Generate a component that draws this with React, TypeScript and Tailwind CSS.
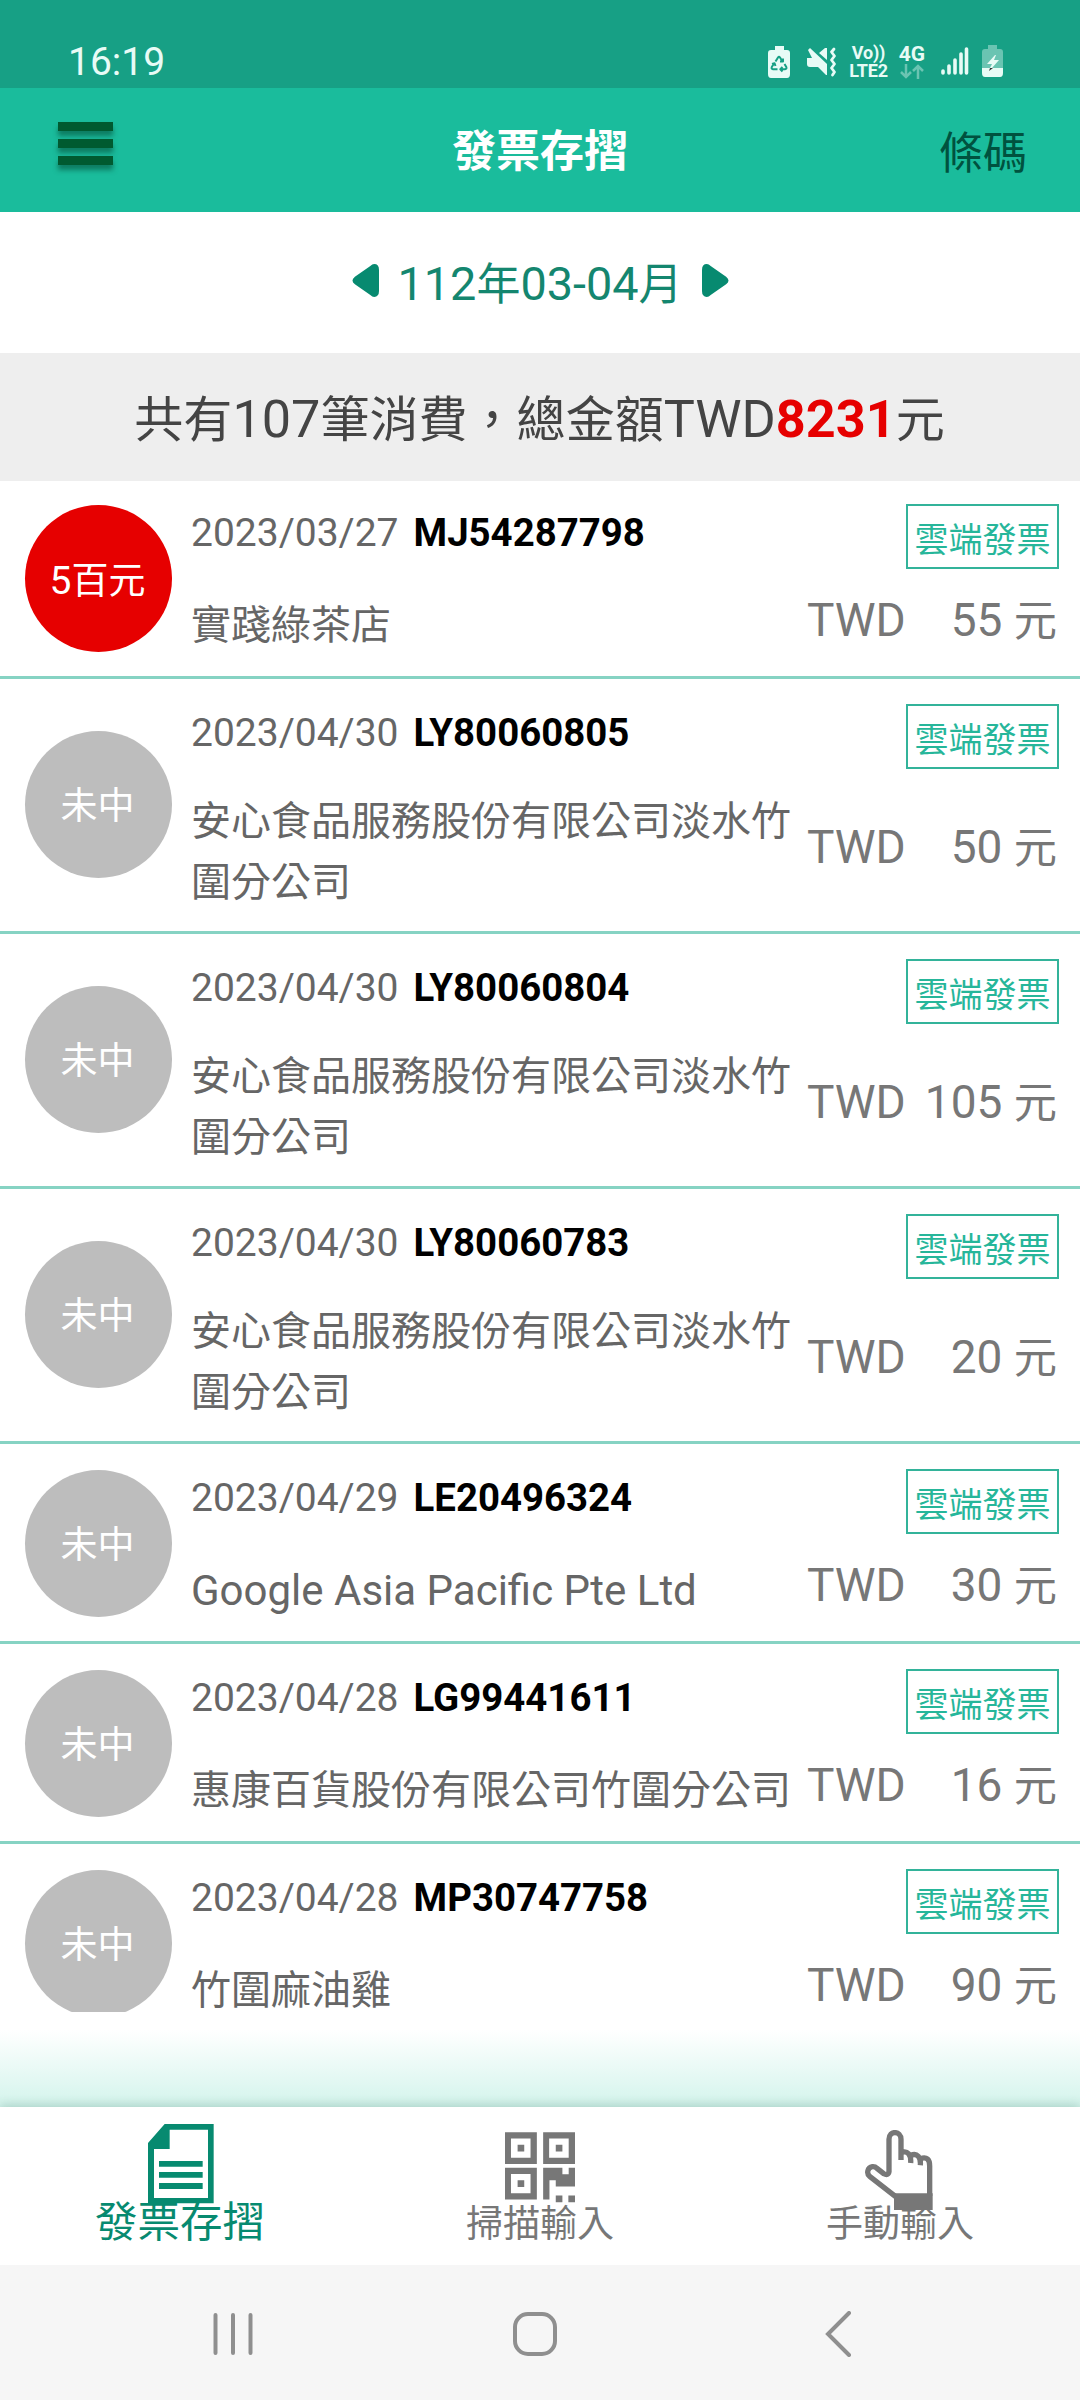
import type { ReactNode } from 'react';
import clsx from 'clsx';

type Invoice = {
  date: string;
  number: string;
  store: ReactNode;
  amount: number;
  prize?: ReactNode;
  tall?: boolean;
};

const invoices: Invoice[] = [
  {
    date: '2023/03/27',
    number: 'MJ54287798',
    store: '實踐綠茶店',
    amount: 55,
    prize: (
      <p>
        <span className="text-[39px]">5</span>百元
      </p>
    ),
  },
  { date: '2023/04/30', number: 'LY80060805', store: '安心食品服務股份有限公司淡水竹圍分公司', amount: 50, tall: true },
  { date: '2023/04/30', number: 'LY80060804', store: '安心食品服務股份有限公司淡水竹圍分公司', amount: 105, tall: true },
  { date: '2023/04/30', number: 'LY80060783', store: '安心食品服務股份有限公司淡水竹圍分公司', amount: 20, tall: true },
  {
    date: '2023/04/29',
    number: 'LE20496324',
    store: <span className="text-[42px]">Google Asia Pacific Pte Ltd</span>,
    amount: 30,
  },
  { date: '2023/04/28', number: 'LG99441611', store: '惠康百貨股份有限公司竹圍分公司', amount: 16 },
  { date: '2023/04/28', number: 'MP30747758', store: '竹圍麻油雞', amount: 90 },
];

// Han glyphs run slightly smaller than the latin text beside them
function Han({ children }: { children: ReactNode }) {
  return <span className="text-[0.94em]">{children}</span>;
}

function StatusBar() {
  return (
    <div className="flex h-[88px] shrink-0 items-end justify-between bg-[#17a085] pr-[76px] pb-[9px] pl-[68px] text-[#e8fbf6]">
      <span className="-mb-[1px] text-[39px] leading-[36px]">16:19</span>
      <div className="flex h-[34px] items-start">
        <svg width="22" height="32" viewBox="0 0 22 32" className="mt-[1px]">
          <path fill="currentColor" d="M7 0h9v4h3q3 0 3 3v21q0 4-3 4H3q-3 0-3-4V7q0-3 3-3h4z" />
          <path
            fill="none"
            stroke="#17a085"
            strokeWidth="2"
            strokeLinejoin="round"
            d="M7.500 15.500 10 11.500q1-1.500 2 0L14.500 15.500M16.500 18l1.800 3q.8 2-1.300 2.200h-4.500M9.500 23.200H5q-2-.2-1.200-2.200l2.200-3.500M14.500 21l-2.200 2.200 2.200 2.300M12 15.500h3v-3M4 18l2.500-.8 1 2.800"
          />
        </svg>
        <svg width="30" height="30" viewBox="0 0 30 30" className="mt-[2px] ml-[17px]">
          <path fill="currentColor" d="M0 11h5L1 3 3 1 20 17v11h-1l-8-8H3q-3 0-3-3zM20 1v12l-8-7 6-5z" />
          <path
            fill="none"
            stroke="currentColor"
            strokeWidth="2.800"
            strokeLinecap="round"
            strokeLinejoin="round"
            d="M27 2l-2.500 3 3 4-3 4 3 4-3 4 3 4-2 3"
          />
        </svg>
        <div className="-mt-[1px] ml-[11px] w-[41px] text-center text-[18px] leading-[18px] font-bold tracking-[-0.2px] whitespace-nowrap">
          <div>Vo))</div>
          <div>LTE2</div>
        </div>
        <div className="ml-[10px] flex w-[26px] flex-col items-center">
          <span className="text-[21px] leading-[18px] font-bold">4G</span>
          <svg width="24" height="15" viewBox="0 0 24 15" className="mt-[1px] opacity-40">
            <path fill="none" stroke="currentColor" strokeWidth="2.500" d="M6 0v13M1 8l5 5 5-5M18 15V2M13 7l5-5 5 5" />
          </svg>
        </div>
        <svg width="28" height="30" viewBox="0 0 28 30" className="mt-[1px] ml-[16px]">
          <path stroke="currentColor" strokeWidth="3.600" strokeLinecap="round" d="M2 25v2M8 20v7M14 14v13M20 8v19M25.500 3v24" />
        </svg>
        <svg width="22" height="32" viewBox="0 0 22 32" className="ml-[13px]">
          <path fill="currentColor" opacity=".4" d="M6 0h9v4h3q3 0 3 3v16H0V7q0-3 3-3h3z" />
          <path fill="currentColor" d="M0 23h21v5q0 4-3 4H3q-3 0-3-4z" />
          <path fill="currentColor" d="M13 10 5 19h5l-2 4h2l7-8h-5l2-5z" />
          <path fill="#333" d="m8 23-1 3 4-3z" />
        </svg>
      </div>
    </div>
  );
}

function Header() {
  return (
    <header className="grid h-[124px] shrink-0 grid-cols-3 items-center bg-[#1abc9c] px-[53px]">
      <div className="flex flex-col gap-[8px] pb-[13px] pl-[5px]">
        <i className="h-[9px] w-[55px] bg-[#005a30] shadow-[0_5px_5px_rgba(0,60,40,0.5)]" />
        <i className="h-[9px] w-[55px] bg-[#005a30] shadow-[0_5px_5px_rgba(0,60,40,0.5)]" />
        <i className="h-[9px] w-[55px] bg-[#005a30] shadow-[0_5px_5px_rgba(0,60,40,0.5)]" />
      </div>
      <h1 className="pt-[4px] text-center text-[44px] font-bold text-white">發票存摺</h1>
      <span className="pt-[7px] text-right text-[44px] text-[#00523f]">條碼</span>
    </header>
  );
}

function Arrow({ className }: { className?: string }) {
  return (
    <svg width="27" height="33" viewBox="0 0 28 34" className={className}>
      <path fill="#078a70" d="M0 6Q0 0 5 0q2 0 4 2l16 11q5 4 0 8L9 32q-2 2-4 2-5 0-5-6z" />
    </svg>
  );
}

function PeriodPicker() {
  return (
    <div className="flex h-[141px] shrink-0 items-center justify-center bg-white pl-[1px] text-[46.800px] text-[#14866f]">
      <Arrow className="mb-[4px] rotate-180" />
      <span className="mr-[19px] ml-[18px] pt-[3px]">
        112<Han>年</Han>03-04<Han>月</Han>
      </span>
      <Arrow className="mb-[4px]" />
    </div>
  );
}

function Summary() {
  return (
    <div className="z-10 flex h-[128px] shrink-0 items-center justify-center bg-[#eee] pt-[7px] text-[52.200px] text-[#444]">
      <p className="-ml-[1px]">
        <Han>共有</Han>107<Han>筆消費，總金額</Han>TWD<b className="text-[#e60000]">8231</b>
        <Han>元</Han>
      </p>
    </div>
  );
}

function InvoiceRow({ invoice }: { invoice: Invoice }) {
  return (
    <li
      className={clsx(
        'flex shrink-0 items-center border-b-[3px] border-[#86d3c3] pr-[21px] pl-[25px]',
        invoice.tall ? 'h-[255px]' : 'h-[200px]',
      )}
    >
      <div
        className={clsx(
          'flex size-[147px] shrink-0 items-center justify-center rounded-full pt-[6px] pr-[2px] text-[37px] text-white',
          invoice.prize ? 'bg-[#e60000]' : 'bg-[#bdbdbd]',
          invoice.tall ? 'mb-[2px]' : 'mt-[1px]',
        )}
      >
        {invoice.prize ?? '未中'}
      </div>
      <div className="ml-[19px] flex h-full flex-1 flex-col">
        <div className="flex h-[111px] items-start justify-between pt-[24px]">
          <div className="text-[39px] leading-[60px] text-[#666]">
            {invoice.date}
            <b className="ml-[15px] text-[38.400px] text-black">{invoice.number}</b>
          </div>
          <span className="mt-[1px] flex h-[65px] w-[153px] items-center justify-center border-2 border-[#33b39a] pt-[6px] text-[34px] leading-none text-[#26b69a]">
            雲端發票
          </span>
        </div>
        <div className="flex min-h-[69px] items-center justify-between">
          <p className="mt-[1px] -mb-[1px] w-[600px] text-[40px] leading-[61px] text-[#666]">{invoice.store}</p>
          <div className="flex w-[252px] justify-between pr-[2px] pb-[7px] text-[46px] leading-[54px] text-[#777]">
            <span>TWD</span>
            <span>
              {invoice.amount} <Han>元</Han>
            </span>
          </div>
        </div>
      </div>
    </li>
  );
}

function DocIcon() {
  return (
    <svg width="66" height="80" viewBox="0 0 198 240" className="ml-[2px]">
      <path fill="#078a70" fillRule="evenodd" d="M50 0h147v238H0V57zM65 17v58H18v147h162V17z" />
      <path fill="#078a70" d="M33 111h131v17H33zM33 144h131v17H33zM33 177h131v18H33z" />
    </svg>
  );
}

function QrIcon() {
  return (
    <svg width="70" height="71" viewBox="0 0 211 213">
      <path
        fill="#777"
        fillRule="evenodd"
        d="M0 0h96v96H0zM18 19v58h59V19zM115 0h96v96h-96zM133 19v58h59V19zM0 107h96v96H0zM18 126v58h59v-58z"
      />
      <path
        fill="#777"
        d="M38 38h20v20H38zM153 38h20v20h-20zM38 145h20v20H38zM115 107h58v20h19v-20h19v57h-58v-19h-19v58h-19zM153 191h20v20h-20zM191 191h20v20h-20z"
      />
    </svg>
  );
}

function HandIcon() {
  return (
    <svg width="68" height="81" viewBox="0 0 204 243" className="-ml-[2px]">
      <path
        fill="none"
        stroke="#777"
        strokeWidth="16"
        strokeLinejoin="round"
        d="M92 200 14 139C4 131 7 112 22 110q8-1 14 5l20 16q14 7 16-6V28c0-28 36-26 36 0v62M108 68c20-8 31 6 29 31M137 76c20-8 31 5 29 30M166 86c20-7 28 3 28 22v90"
      />
      <path fill="#777" d="M87 190h116v50H87z" />
    </svg>
  );
}

function TabBar() {
  return (
    <nav className="z-10 grid h-[158px] shrink-0 grid-cols-3 bg-white text-[37px] leading-[40px] text-[#777] shadow-[0_-2px_10px_rgba(0,70,50,0.2)]">
      <div className="flex flex-col items-center pt-[17px] text-[42.500px] text-[#078a70]">
        <DocIcon />
        <span className="-mt-[1px]">發票存摺</span>
      </div>
      <div className="flex flex-col items-center pt-[25px]">
        <QrIcon />
        <span className="mt-[2px]">掃描輸入</span>
      </div>
      <div className="flex flex-col items-center pt-[23px]">
        <HandIcon />
        <span className="-mt-[6px]">手動輸入</span>
      </div>
    </nav>
  );
}

function SystemNav() {
  return (
    <div className="z-10 flex h-[135px] shrink-0 items-start bg-[#f6f6f6] pt-[46px] pl-[212px]">
      <svg width="42" height="46" viewBox="0 0 42 46" className="text-[#8f8f8f]">
        <path stroke="currentColor" strokeWidth="4" strokeLinecap="round" d="M3.500 4v38M21 4v38M38.500 4v38" />
      </svg>
      <div className="mt-[1px] ml-[259px] size-[44px] rounded-[15px] border-4 border-[#8f8f8f]" />
      <svg width="28" height="46" viewBox="0 0 28 46" className="ml-[267px] text-[#8f8f8f]">
        <path fill="none" stroke="currentColor" strokeWidth="4" strokeLinecap="round" d="M25 2 4 23l21 21" />
      </svg>
    </div>
  );
}

export default function App() {
  return (
    <div
      lang="zh-Hant"
      className="flex h-[2400px] w-[1080px] flex-col overflow-hidden bg-white font-['Roboto','Noto_Sans_CJK_TC',sans-serif]"
    >
      <StatusBar />
      <Header />
      <PeriodPicker />
      <Summary />
      <ul className="-mt-[2px] flex h-[1533px] shrink-0 flex-col overflow-hidden">
        {invoices.map((invoice) => (
          <InvoiceRow key={invoice.number} invoice={invoice} />
        ))}
      </ul>
      <div className="mt-[18px] h-[77px] shrink-0 bg-linear-to-b from-white to-[#d3f4ec]" />
      <TabBar />
      <SystemNav />
    </div>
  );
}
